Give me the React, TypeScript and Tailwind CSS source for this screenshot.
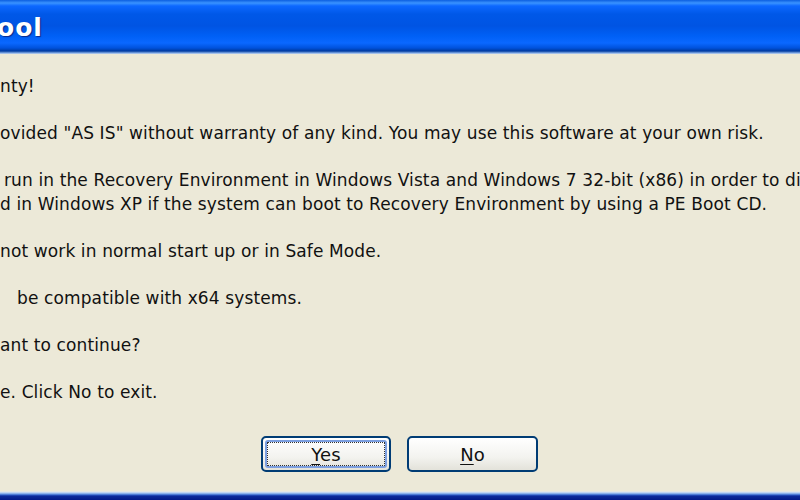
import React from "react";

const font = { fontFamily: '"DejaVu Sans", "Noto Sans", sans-serif' };

function Line({ children, className = "" }: { children: React.ReactNode; className?: string }) {
  return <div className={"h-[23.5px] leading-[23.5px] whitespace-pre " + className}>{children}</div>;
}

export default function App() {
  return (
    <div className="w-[800px] h-[500px] flex flex-col overflow-hidden bg-[#ECE9D8]" style={font}>
      <div className="h-[54px] shrink-0 flex items-start bg-[linear-gradient(to_bottom,#0c5fe0_0px,#3a93ff_3px,#0c68ff_6px,#0058e8_14px,#0054e3_26px,#0060f6_36px,#0a68ff_43px,#0052dc_48px,#003a9e_51px,#7fa9e6_53px,#c8d8ee_54px)]">
        <span className="ml-[-3px] mt-[12px] text-[25px] font-bold text-white leading-[32px] tracking-[1px] [text-shadow:1px_1px_1px_#0a2a8a]">
          ool
        </span>
      </div>
      <div className="flex-1 flex flex-col pt-[21px] text-[17px] tracking-[0.12px] text-[#111]">
        <Line>nty!</Line>
        <Line className="mt-[23.5px]">ovided "AS IS" without warranty of any kind. You may use this software at your own risk.</Line>
        <Line className="mt-[23.5px] ml-[4px]">run in the Recovery Environment in Windows Vista and Windows 7 32-bit (x86) in order to disinfect</Line>
        <Line>d in Windows XP if the system can boot to Recovery Environment by using a PE Boot CD.</Line>
        <Line className="mt-[23.5px]">not work in normal start up or in Safe Mode.</Line>
        <Line className="mt-[23.5px] ml-[17px]">be compatible with x64 systems.</Line>
        <Line className="mt-[23.5px]">ant to continue?</Line>
        <Line className="mt-[23.5px]">e. Click No to exit.</Line>
        <div className="mt-[32px] flex gap-[16px] ml-[261px]">
          <button className="w-[130px] h-[36px] rounded-[5px] border-[2px] border-[#003c74] bg-[linear-gradient(to_bottom,#ffffff,#f3f3ef_60%,#e3e2da)] p-[2px]">
            <div className="w-full h-full rounded-[3px] border-[2px] border-[#7c9fe0] flex items-center justify-center">
              <div className="w-full h-full border border-dotted border-[#333] flex items-center justify-center text-[18px] text-[#111]">
                <span><span className="underline underline-offset-[3px]">Y</span>es</span>
              </div>
            </div>
          </button>
          <button className="w-[131px] h-[36px] rounded-[5px] border-[2px] border-[#003c74] bg-[linear-gradient(to_bottom,#ffffff,#f3f3ef_60%,#e3e2da)] flex items-center justify-center text-[18px] text-[#111]">
            <span><span className="underline underline-offset-[3px]">N</span>o</span>
          </button>
        </div>
      </div>
      <div className="h-[9px] shrink-0 bg-[linear-gradient(to_bottom,#ECE9D8_0px,#d6e4f4_1px,#a6c6f0_2px,#6d9be6_3px,#2e5fc8_4px,#0a2a9c_5px,#001a8a_9px)]" />
    </div>
  );
}
